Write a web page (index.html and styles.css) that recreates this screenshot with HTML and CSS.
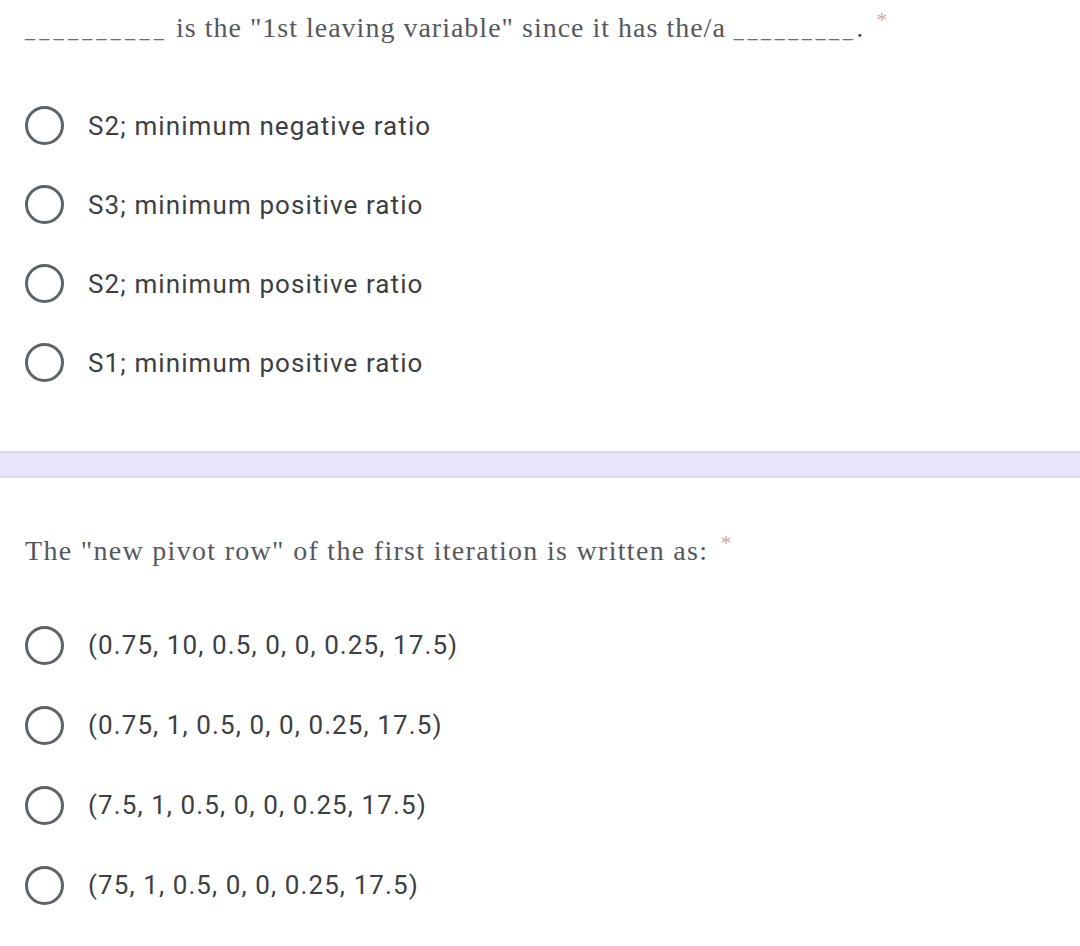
FILE: index.html
```html
<!DOCTYPE html>
<html>
<head>
<meta charset="utf-8">
<link rel="stylesheet" href="styles.css">
</head>
<body>
<section class="question q1">
  <div class="title"><span class="blank">__________</span> is the "1st leaving variable" since it has the/a <span class="blank">_________</span>. <span class="req">*</span></div>
  <div class="options">
    <div class="option"><span class="radio"></span><span class="label">S2; minimum negative ratio</span></div>
    <div class="option"><span class="radio"></span><span class="label">S3; minimum positive ratio</span></div>
    <div class="option"><span class="radio"></span><span class="label">S2; minimum positive ratio</span></div>
    <div class="option"><span class="radio"></span><span class="label">S1; minimum positive ratio</span></div>
  </div>
</section>
<div class="band"></div>
<section class="question q2">
  <div class="title">The "new pivot row" of the first iteration is written as: <span class="req">*</span></div>
  <div class="options">
    <div class="option"><span class="radio"></span><span class="label">(0.75, 10, 0.5, 0, 0, 0.25, 17.5)</span></div>
    <div class="option"><span class="radio"></span><span class="label">(0.75, 1, 0.5, 0, 0, 0.25, 17.5)</span></div>
    <div class="option"><span class="radio"></span><span class="label">(7.5, 1, 0.5, 0, 0, 0.25, 17.5)</span></div>
    <div class="option"><span class="radio"></span><span class="label">(75, 1, 0.5, 0, 0, 0.25, 17.5)</span></div>
  </div>
</section>
</body>
</html>
```
FILE: styles.css
```css
html, body {
  margin: 0;
  padding: 0;
  background: #ffffff;
}
body {
  width: 1080px;
  height: 946px;
  overflow: hidden;
}
.question {
  padding-left: 25px;
}
.title {
  font-family: "Liberation Serif", "Times New Roman", serif;
  font-size: 28px;
  letter-spacing: 1px;
  color: #55585d;
  line-height: 40px;
  white-space: nowrap;
}
.q1 .title {
  padding-top: 0;
  height: 86px;
}
.blank {
  font-size: 20px;
  letter-spacing: 4.3px;
  color: #6a6d72;
}
.q1 .title .blank + .blank,
.blank.end {
  letter-spacing: 3.6px;
}
.req {
  color: #d9a3a3;
  font-size: 22px;
  vertical-align: 10px;
  margin-left: 4px;
  letter-spacing: 0;
}
.options {
  display: flex;
  flex-direction: column;
}
.option {
  display: flex;
  align-items: center;
  height: 79px;
}
.radio {
  box-sizing: border-box;
  width: 39px;
  height: 39px;
  border: 3.5px solid #5f6368;
  border-radius: 50%;
  flex: none;
}
.label {
  margin-left: 24px;
  font-family: Roboto, "Liberation Sans", sans-serif;
  font-size: 26px;
  letter-spacing: 1.1px;
  color: #3c4043;
}
.band {
  margin-top: 49px;
  height: 23px;
  background: #e7e6fd;
  border-top: 2px solid #dcdce4;
  border-bottom: 2px solid #dcdce4;
}
.q2 .title {
  letter-spacing: 1.3px;
  padding-top: 45px;
  height: 82px;
}
.q2 .option {
  height: 80px;
}
```
